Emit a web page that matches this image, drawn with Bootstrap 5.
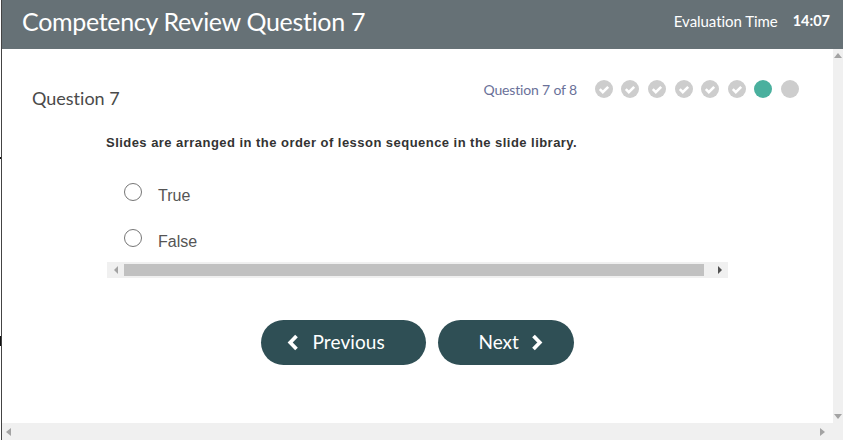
<!DOCTYPE html>
<html lang="en">
<head>
<meta charset="utf-8">
<title>Competency Review Question 7</title>
<link href="https://cdn.jsdelivr.net/npm/bootstrap@5.3.0/dist/css/bootstrap.min.css" rel="stylesheet">
<style>
html,body{height:440px;overflow:hidden;background:#fff;}
body{font-family:"Lato",sans-serif;font-variant-ligatures:none;}
.frame{height:440px;width:842px;margin-left:1px;border-left:1px solid #444;}
.tick{position:absolute;left:0;width:1px;background:#111;}
.tick-a{top:157px;height:2px;}
.tick-b{top:336px;height:10px;}
.topbar{height:49px;background:#667176;color:#fff;padding:0 13px 7px 20px;}
.topbar h1{font-size:25px;font-weight:400;margin:0;line-height:30px;letter-spacing:-.32px;}
.evalt{font-size:15px;margin-right:15px;letter-spacing:-.05px;}
.clock{font-size:14.5px;font-weight:700;letter-spacing:0;}
.midrow{height:374px;}
.vbar{width:10px;background:#f0f0f0;}
.hbar{height:17px;background:#f0f0f0;}
.qtitle{font-size:18px;font-weight:400;color:#4a4a4a;margin:9px 0 0;line-height:22px;}
.qcount{font-size:14px;color:#6a7199;margin-right:18px;letter-spacing:-.17px;position:relative;top:1px;}
.dots{gap:8.6px;}
.dot{width:18px;height:18px;border-radius:50%;background:#cdcdcd;display:block;}
.dot.now{background:#4ab09e;}
.head-row{padding:29px 34px 0 30px;height:84px;}
.qtext{font:700 13px "Liberation Sans",sans-serif;letter-spacing:.46px;color:#333;margin:0 0 0 104px;line-height:20px;}
.answers{margin:30px 0 0 122px;}
.ans{height:46px;color:#555;font:16px "Liberation Sans",sans-serif;}
.ans .form-check-input{width:18px;height:18px;margin:0 16px 0 0;border:1px solid #767676;float:none;flex:none;}
.ans label{position:relative;top:4px;}
.inhbar{width:621px;height:16px;margin-left:105px;background:#f0f0f0;margin-top:-13px;}
.arrowcell{width:17px;flex:none;}
.inthumb{width:580px;height:12px;background:#c1c1c1;}
.navbtns{gap:12px;margin-top:42px;padding-right:1px;}
.pill{background:#2f4f55;color:#fff;border:0;border-radius:23px;height:45px;font-size:19px;padding:0;display:flex;align-items:center;}
.pill:hover,.pill:active{background:#2f4f55!important;color:#fff!important;}
.prevb{width:165px;padding-left:25px;gap:14px;letter-spacing:.1px;}
.nextb{width:136px;padding-left:41px;gap:12px;}
</style>
</head>
<body>
<span class="tick tick-a"></span><span class="tick tick-b"></span>
<div class="frame d-flex flex-column">
  <header class="topbar d-flex align-items-center justify-content-between">
    <h1>Competency Review Question 7</h1>
    <div class="d-flex align-items-center"><span class="evalt">Evaluation Time</span><span class="clock">14:07</span></div>
  </header>
  <div class="midrow d-flex">
    <main class="flex-grow-1 overflow-hidden">
      <div class="head-row d-flex justify-content-between align-items-start">
        <h2 class="qtitle">Question 7</h2>
        <div class="d-flex align-items-center">
          <span class="qcount">Question 7 of 8</span>
          <div class="dots d-flex">
            <svg class="dot" viewBox="0 0 18 18"><path d="M4.800 9.200l3 3 5.400-5.400" fill="none" stroke="#fff" stroke-width="2.600"/></svg>
            <svg class="dot" viewBox="0 0 18 18"><path d="M4.800 9.200l3 3 5.400-5.400" fill="none" stroke="#fff" stroke-width="2.600"/></svg>
            <svg class="dot" viewBox="0 0 18 18"><path d="M4.800 9.200l3 3 5.400-5.400" fill="none" stroke="#fff" stroke-width="2.600"/></svg>
            <svg class="dot" viewBox="0 0 18 18"><path d="M4.800 9.200l3 3 5.400-5.400" fill="none" stroke="#fff" stroke-width="2.600"/></svg>
            <svg class="dot" viewBox="0 0 18 18"><path d="M4.800 9.200l3 3 5.400-5.400" fill="none" stroke="#fff" stroke-width="2.600"/></svg>
            <svg class="dot" viewBox="0 0 18 18"><path d="M4.800 9.200l3 3 5.400-5.400" fill="none" stroke="#fff" stroke-width="2.600"/></svg>
            <span class="dot now"></span>
            <span class="dot"></span>
          </div>
        </div>
      </div>
      <p class="qtext">Slides are arranged in the order of lesson sequence in the slide library.</p>
      <div class="answers">
        <div class="ans d-flex align-items-start form-check p-0 m-0"><input class="form-check-input" type="radio" name="a" id="a1"><label for="a1">True</label></div>
        <div class="ans d-flex align-items-start form-check p-0 m-0"><input class="form-check-input" type="radio" name="a" id="a2"><label for="a2">False</label></div>
      </div>
      <div class="inhbar d-flex align-items-center">
        <div class="arrowcell d-flex justify-content-center"><svg width="8" height="8" viewBox="0 0 8 8"><path d="M6 0L2 4l4 4z" fill="#a3a3a3"/></svg></div>
        <div class="inthumb"></div>
        <div class="flex-grow-1 d-flex justify-content-end pe-1"><svg width="8" height="8" viewBox="0 0 8 8"><path d="M2 0l4 4-4 4z" fill="#505050"/></svg></div>
      </div>
      <div class="navbtns d-flex justify-content-center">
        <button class="btn pill prevb" type="button"><svg width="13" height="17" viewBox="0 0 13 17"><path d="M10.500 2L4.200 8.500l6.300 6.500" fill="none" stroke="#fff" stroke-width="3.700"/></svg>Previous</button>
        <button class="btn pill nextb" type="button">Next<svg width="13" height="17" viewBox="0 0 13 17"><path d="M2.500 2l6.300 6.500L2.500 15" fill="none" stroke="#fff" stroke-width="3.700"/></svg></button>
      </div>
    </main>
    <aside class="vbar d-flex flex-column justify-content-between align-items-center py-1">
      <svg width="8" height="5" viewBox="0 0 8 5"><path d="M4 0l4 5H0z" fill="#a3a3a3"/></svg>
      <svg width="8" height="5" viewBox="0 0 8 5"><path d="M4 5l4-5H0z" fill="#a3a3a3"/></svg>
    </aside>
  </div>
  <div class="hbar d-flex justify-content-between align-items-center">
    <svg class="ms-1" width="5" height="8" viewBox="0 0 5 8"><path d="M0 4l5-4v8z" fill="#a3a3a3"/></svg>
    <div class="d-flex align-items-center h-100"><svg class="me-2" width="5" height="8" viewBox="0 0 5 8"><path d="M5 4L0 0v8z" fill="#a3a3a3"/></svg><span class="d-block h-100 vbar"></span></div>
  </div>
</div>
</body>
</html>
